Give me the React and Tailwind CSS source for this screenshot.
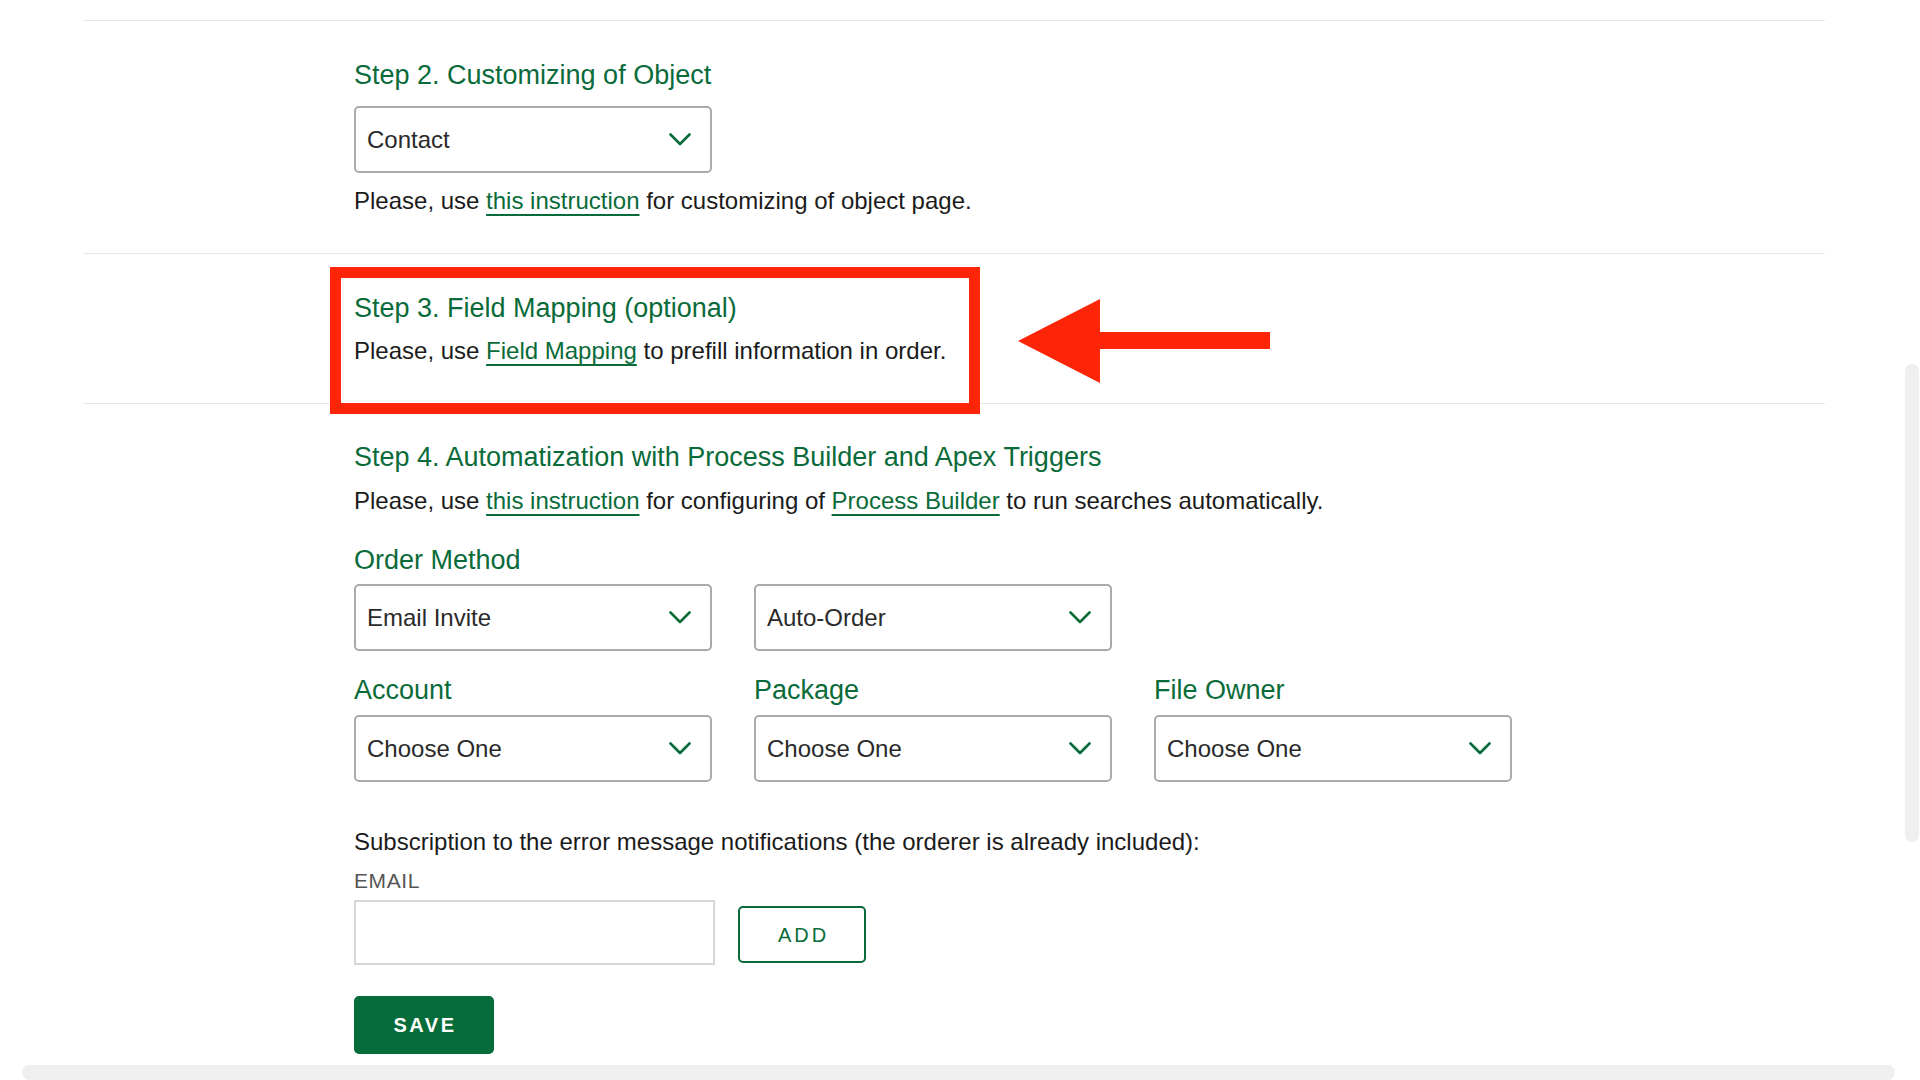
import React from 'react';

// green used for headings, links and buttons
const Chevron = () => (
  <svg width="22" height="13" viewBox="0 0 22 13" fill="none" className="shrink-0">
    <path d="M1.5 1.5 L11 11 L20.5 1.5" stroke="#0a6b3a" strokeWidth="2.6" strokeLinecap="round" strokeLinejoin="round" />
  </svg>
);

const Select = ({ value }) => (
  <div className="w-[358px] h-[67px] border-2 border-[#aaaaaa] rounded-[5px] flex items-center justify-between pl-[11px] pr-[19px] bg-white">
    <span className="text-[24px] text-[#2a2a2a]">{value}</span>
    <Chevron />
  </div>
);

const Link = ({ children }) => (
  <a href="#" className="text-[#0a6b3a] underline decoration-2 underline-offset-[5px]">
    {children}
  </a>
);

const Heading = ({ children, className = '' }) => (
  <h2 className={`text-[27px] leading-[32px] text-[#0a6b3a] ${className}`}>{children}</h2>
);

export default function App() {
  return (
    <div
      className="relative w-full h-[1080px] overflow-hidden bg-white"
      style={{ fontFamily: '"Liberation Sans", Arial, sans-serif' }}
    >
      <div className="ml-[83px] w-[1742px] pt-[20px]">
        {/* Step 2 */}
        <section className="border-t border-[#e6e6e6] pl-[271px] pt-[38px] pb-[38px]">
          <Heading>Step 2. Customizing of Object</Heading>
          <div className="mt-[15px]">
            <Select value="Contact" />
          </div>
          <p className="mt-[14px] text-[24px] leading-[28px] text-[#1b1b1b]">
            Please, use <Link>this instruction</Link> for customizing of object page.
          </p>
        </section>

        {/* Step 3 */}
        <section className="border-t border-[#e6e6e6] pl-[271px] pt-[38px] pb-[38px]">
          <Heading>Step 3. Field Mapping (optional)</Heading>
          <p className="mt-[13px] text-[24px] leading-[28px] text-[#1b1b1b]">
            Please, use <Link>Field Mapping</Link> to prefill information in order.
          </p>
        </section>

        {/* Step 4 */}
        <section className="border-t border-[#e6e6e6] pl-[271px] pt-[37px]">
          <Heading>Step 4. Automatization with Process Builder and Apex Triggers</Heading>
          <p className="mt-[14px] text-[24px] leading-[28px] text-[#1b1b1b]">
            Please, use <Link>this instruction</Link> for configuring of <Link>Process Builder</Link> to run
            searches automatically.
          </p>

          <Heading className="mt-[29px]">Order Method</Heading>
          <div className="mt-[8px] flex gap-[42px]">
            <Select value="Email Invite" />
            <Select value="Auto-Order" />
          </div>

          <div className="mt-[23px] flex gap-[42px]">
            {['Account', 'Package', 'File Owner'].map((label) => (
              <div key={label}>
                <Heading>{label}</Heading>
                <div className="mt-[9px]">
                  <Select value="Choose One" />
                </div>
              </div>
            ))}
          </div>

          <p className="mt-[46px] text-[24px] leading-[28px] text-[#1b1b1b]">
            Subscription to the error message notifications (the orderer is already included):
          </p>
          <div className="mt-[13px] text-[21px] leading-[24px] tracking-[0.6px] text-[#555555]">EMAIL</div>
          <div className="mt-[7px] flex items-start">
            <input type="text" className="w-[361px] h-[65px] border-2 border-[#d6d6d6] outline-none px-3 text-[22px]" />
            <button className="ml-[23px] mt-[6px] w-[128px] h-[57px] border-2 border-[#0a6b3a] rounded-[5px] text-[20px] tracking-[3px] text-[#0a6b3a] pl-[3px]">
              ADD
            </button>
          </div>
          <button className="mt-[31px] w-[140px] h-[58px] rounded-[5px] bg-[#066c39] text-white font-bold text-[20px] tracking-[2.5px] pl-[2px]">
            SAVE
          </button>
        </section>
      </div>

      {/* annotation: red frame round step 3 */}
      <div className="absolute left-[330px] top-[267px] w-[650px] h-[147px] border-[11px] border-[#fd2508]" />
      <svg className="absolute left-[1018px] top-[299px]" width="252" height="84" viewBox="0 0 252 84">
        <polygon points="0,42 82,0 82,33 252,33 252,50 82,50 82,84" fill="#fd2508" />
      </svg>

      {/* scrollbars */}
      <div className="absolute left-[1905px] top-[364px] w-[14px] h-[478px] rounded-full bg-[#efefef]" />
      <div className="absolute left-[22px] top-[1065px] w-[1873px] h-[15px] rounded-full bg-[#efefef]" />
    </div>
  );
}
